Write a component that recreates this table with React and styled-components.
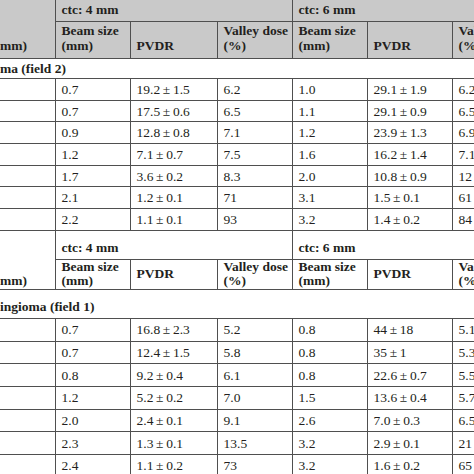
import React from 'react'
import styled, { createGlobalStyle } from 'styled-components'

const GlobalStyle = createGlobalStyle`
  html, body {
    margin: 0;
    padding: 0;
    background: #ffffff;
  }
  body {
    font-family: "Liberation Serif", "Times New Roman", serif;
    color: #231f20;
  }
`

const Frame = styled.div`
  width: 474px;
  height: 474px;
  overflow: hidden;
  background: #ffffff;
`

const Grid = styled.table`
  border-collapse: collapse;
  table-layout: fixed;
  width: 527px;
  margin-top: -8px;
  font-size: 13.5px;
  line-height: 15px;
`

const Row = styled.tr`
  height: ${p => p.$h}px;
  background: ${p => p.$bg || 'transparent'};
`

const Head = styled.th`
  border: 1px solid #4f4f4f;
  border-left-style: ${p => (p.$edge ? 'none' : 'solid')};
  padding: ${p => (p.$edge ? `0 0 ${p.$pb}px 0` : `0 4px ${p.$pb}px 6px`)};
  line-height: ${p => p.$lh || 15}px;
  text-align: left;
  font-weight: 700;
  vertical-align: ${p => p.$valign || 'bottom'};
  white-space: nowrap;
  overflow: hidden;
`

const Cell = styled.td`
  border: 1px solid #4f4f4f;
  border-left-style: ${p => (p.$edge ? 'none' : 'solid')};
  padding: ${p => (p.$edge ? `0 0 ${p.$pb || 0}px 0` : '0 4px 0 6px')};
  font-weight: ${p => (p.$bold ? 700 : 400)};
  vertical-align: ${p => p.$valign || 'middle'};
  white-space: nowrap;
  overflow: hidden;
`

const pm = (a, b) => `${a}\u2009±\u2009${b}`

const blocks = [
  {
    bg: '#c9c9c9',
    heights: { ctc: 29, head: 37, section: 20, data: 21.7 },
    headPad: 5,
    headLine: 15,
    sectionPad: 2,
    pvdrAlign: 'bottom',
    section: 'ma (field 2)',
    rows: [
      ['0.7', pm('19.2', '1.5'), '6.2', '1.0', pm('29.1', '1.9'), '6.2'],
      ['0.7', pm('17.5', '0.6'), '6.5', '1.1', pm('29.1', '0.9'), '6.5'],
      ['0.9', pm('12.8', '0.8'), '7.1', '1.2', pm('23.9', '1.3'), '6.9'],
      ['1.2', pm('7.1', '0.7'), '7.5', '1.6', pm('16.2', '1.4'), '7.1'],
      ['1.7', pm('3.6', '0.2'), '8.3', '2.0', pm('10.8', '0.9'), '12'],
      ['2.1', pm('1.2', '0.1'), '71', '3.1', pm('1.5', '0.1'), '61'],
      ['2.2', pm('1.1', '0.1'), '93', '3.2', pm('1.4', '0.2'), '84'],
    ],
  },
  {
    bg: '#ffffff',
    heights: { ctc: 29, head: 29, section: 29, data: 22.7 },
    headPad: 1,
    headLine: 14,
    sectionPad: 4,
    pvdrAlign: 'middle',
    section: 'ingioma (field 1)',
    rows: [
      ['0.7', pm('16.8', '2.3'), '5.2', '0.8', pm('44', '18'), '5.1'],
      ['0.7', pm('12.4', '1.5'), '5.8', '0.8', pm('35', '1'), '5.3'],
      ['0.8', pm('9.2', '0.4'), '6.1', '0.8', pm('22.6', '0.7'), '5.5'],
      ['1.2', pm('5.2', '0.2'), '7.0', '1.5', pm('13.6', '0.4'), '5.7'],
      ['2.0', pm('2.4', '0.1'), '9.1', '2.6', pm('7.0', '0.3'), '6.5'],
      ['2.3', pm('1.3', '0.1'), '13.5', '3.2', pm('2.9', '0.1'), '21'],
      ['2.4', pm('1.1', '0.2'), '73', '3.2', pm('1.6', '0.2'), '65'],
    ],
  },
]

const colWidths = [55, 75, 87, 75, 75, 85, 75]

function SubHeads({ pvdrAlign, pad, line }) {
  return (
    <>
      <Head $pb={pad} $lh={line}>Beam size<br />(mm)</Head>
      <Head $pb={pvdrAlign === 'middle' ? 0 : pad} $lh={line} $valign={pvdrAlign}>PVDR</Head>
      <Head $pb={pad} $lh={line}>Valley dose<br />(%)</Head>
    </>
  )
}

function Block({ block }) {
  const { bg, heights, headPad, headLine, sectionPad, pvdrAlign, section, rows } = block
  return (
    <tbody>
      <Row $h={heights.ctc} $bg={bg}>
        <Head $edge $pb={headPad} $lh={headLine} rowSpan={2}>mm)</Head>
        <Head $pb={4} colSpan={3}>ctc: 4 mm</Head>
        <Head $pb={4} colSpan={3}>ctc: 6 mm</Head>
      </Row>
      <Row $h={heights.head} $bg={bg}>
        <SubHeads pvdrAlign={pvdrAlign} pad={headPad} line={headLine} />
        <SubHeads pvdrAlign={pvdrAlign} pad={headPad} line={headLine} />
      </Row>
      <Row $h={heights.section}>
        <Cell $edge $bold $pb={sectionPad} colSpan={7} $valign="bottom">{section}</Cell>
      </Row>
      {rows.map((r, i) => (
        <Row key={i} $h={heights.data}>
          <Cell $edge />
          {r.map((v, j) => (
            <Cell key={j}>{v}</Cell>
          ))}
        </Row>
      ))}
    </tbody>
  )
}

export default function App() {
  return (
    <Frame>
      <GlobalStyle />
      <Grid>
        <colgroup>
          {colWidths.map((w, i) => (
            <col key={i} style={{ width: w }} />
          ))}
        </colgroup>
        {blocks.map((b, i) => (
          <Block key={i} block={b} />
        ))}
      </Grid>
    </Frame>
  )
}
